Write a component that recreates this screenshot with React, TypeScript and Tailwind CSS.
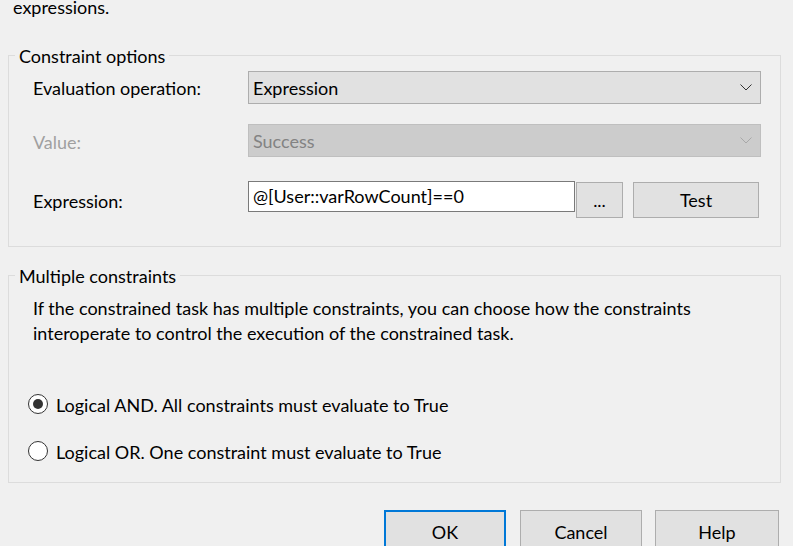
import React from "react";

const font = { fontFamily: "Lato, 'Segoe UI', 'Noto Sans', sans-serif" };

const Chevron = ({ color }: { color: string }) => (
  <svg width="12" height="7" viewBox="0 0 12 7">
    <polyline points="0.5,0.5 6,6 11.5,0.5" fill="none" stroke={color} strokeWidth="1" />
  </svg>
);

const GroupBox = ({ title, children, className }: any) => (
  <fieldset className={`ml-[8px] w-[773px] border border-[#dcdcdc] ${className}`}>
    <legend className="ml-[6px] px-[4px] pt-[1px] leading-[24px]">{title}</legend>
    {children}
  </fieldset>
);

const Radio = ({ checked, label }: any) => (
  <div className="flex items-center h-[24px] pl-[19px]">
    <span className="flex items-center justify-center w-[20px] h-[20px] rounded-full border border-[#333333] bg-white">
      {checked && <span className="w-[10px] h-[10px] rounded-full bg-[#333333]" />}
    </span>
    <span className="ml-[8px] pt-[1px] leading-[24px]">{label}</span>
  </div>
);

const DialogButton = ({ label, primary, width }: any) => (
  <button
    className={`h-[44px] bg-[#e1e1e1] leading-[24px] ${width} ${
      primary ? "border-2 border-[#0078d7]" : "border border-[#adadad]"
    }`}
  >
    {label}
  </button>
);

export default function App() {
  return (
    <div
      className="w-[793px] h-[546px] overflow-hidden bg-[#f0f0f0] text-[18px] text-black"
      style={font}
    >
      <p className="-mt-[5px] pl-[13px] leading-[24px]">expressions.</p>

      <GroupBox title="Constraint options" className="mt-[24px] pb-[28px]">
        <div className="pl-[24px]">
          <div className="flex items-center h-[33px] mt-[3px]">
            <span className="w-[215px] pt-[2px]">Evaluation operation:</span>
            <div className="flex items-center justify-between w-[513px] h-[33px] pl-[4px] pr-[8px] bg-[#e1e1e1] border border-[#adadad]">
              <span className="pt-[1px]">Expression</span>
              <Chevron color="#333333" />
            </div>
          </div>

          <div className="flex items-center h-[33px] mt-[20px]">
            <span className="w-[215px] pt-[3px] text-[#a0a0a0]">Value:</span>
            <div className="flex items-center justify-between w-[513px] h-[33px] pl-[4px] pr-[8px] bg-[#cccccc] border border-[#bfbfbf] text-[#838383]">
              <span className="pt-[1px]">Success</span>
              <Chevron color="#a8a8a8" />
            </div>
          </div>

          <div className="flex items-start h-[37px] mt-[24px]">
            <span className="w-[215px] self-center pt-[3px]">Expression:</span>
            <div className="flex items-center w-[327px] h-[31px] pl-[4px] bg-white border border-[#7a7a7a]">
              @[User::varRowCount]==0
            </div>
            <button className="ml-[1px] mt-[1px] w-[47px] h-[36px] bg-[#e1e1e1] border border-[#adadad] leading-[24px]">
              ...
            </button>
            <button className="ml-[10px] mt-[1px] w-[126px] h-[36px] bg-[#e1e1e1] border border-[#adadad] leading-[24px]">
              Test
            </button>
          </div>
        </div>
      </GroupBox>

      <GroupBox title="Multiple constraints" className="mt-[16px] pb-[19px]">
        <p className="mt-[8px] pl-[24px] pr-[10px] leading-[25px]">
          If the constrained task has multiple constraints, you can choose how the constraints
          interoperate to control the execution of the constrained task.
        </p>
        <div className="mt-[46px] flex flex-col gap-[23px]">
          <Radio checked label="Logical AND. All constraints must evaluate to True" />
          <Radio label="Logical OR. One constraint must evaluate to True" />
        </div>
      </GroupBox>

      <div className="flex mt-[27px] pl-[384px]">
        <DialogButton label="OK" primary width="w-[122px]" />
        <DialogButton label="Cancel" width="w-[122px] ml-[14px]" />
        <DialogButton label="Help" width="w-[124px] ml-[13px]" />
      </div>
    </div>
  );
}
